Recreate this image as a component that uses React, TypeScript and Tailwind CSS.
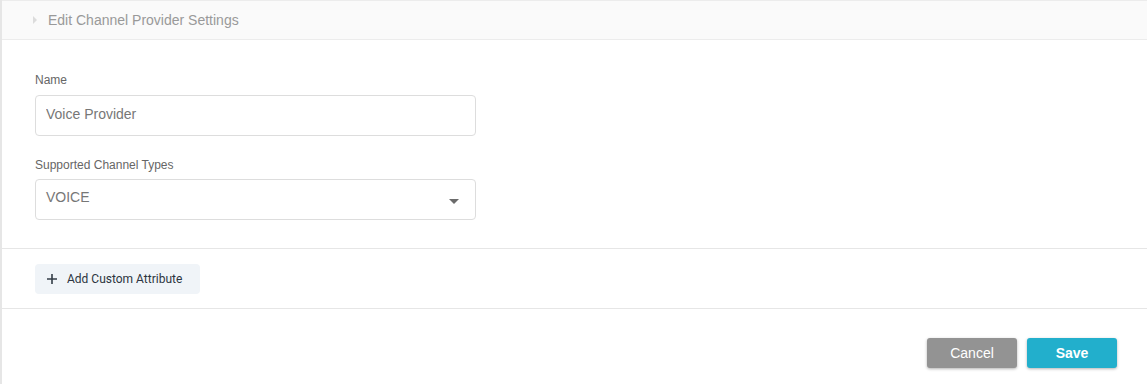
import * as React from 'react';
import { useState } from 'react';

export default function App() {
  const [name, setName] = useState('Voice Provider');
  const [channel, setChannel] = useState('VOICE');

  return (
    <div className="w-full h-[384px] bg-white font-['Liberation_Sans',Arial,sans-serif] border-l-2 border-[#e6e6e6] flex flex-col">
      {/* Header */}
      <div className="h-[40px] bg-[#fafafa] border-t border-b border-[#ececec] flex items-center pl-[30px]">
        <svg className="w-[6px] h-[8px] mr-[10px]" viewBox="0 0 6 8">
          <path d="M1 0 L5 4 L1 8 Z" fill="#dcdcdc" />
        </svg>
        <span className="text-[14px] text-[#999999] pt-[1px]">Edit Channel Provider Settings</span>
      </div>

      {/* Fields */}
      <div className="px-[33px] pt-[32px] pb-[28px] border-b border-[#e6e6e6]">
        <label className="block text-[12px] leading-[16px] text-[#666666] mb-[7px]">Name</label>
        <input
          value={name}
          onChange={(e) => setName(e.target.value)}
          className="block w-[441px] h-[41px] px-[10px] pb-[4px] border border-[#dddddd] rounded-[4px] text-[14px] text-[#777777] outline-none"
        />

        <label className="block text-[12px] leading-[16px] text-[#666666] mt-[21px] mb-[6px]">
          Supported Channel Types
        </label>
        <div className="relative w-[441px] h-[41px] border border-[#dddddd] rounded-[4px] flex items-center">
          <span className="pl-[10px] pb-[4px] text-[14px] text-[#777777]">{channel}</span>
          <svg
            className="absolute right-[16px] top-[19px] w-[10px] h-[5px]"
            viewBox="0 0 10 5"
            onClick={() => setChannel(channel)}
          >
            <path d="M0 0 L10 0 L5 5 Z" fill="#6b6b6b" />
          </svg>
        </div>
      </div>

      {/* Custom attributes */}
      <div className="px-[33px] pt-[15px] pb-[14px] border-b border-[#e6e6e6]">
        <button className="h-[30px] w-[165px] bg-[#f0f4f8] rounded-[4px] flex items-center pl-[12px] font-['Roboto',sans-serif] font-normal text-[12px] text-[#2c3540]">
          <svg className="w-[10px] h-[10px] mr-[10px]" viewBox="0 0 10 10">
            <path d="M5 0 V10 M0 5 H10" stroke="#333d47" strokeWidth="1.6" />
          </svg>
          Add Custom Attribute
        </button>
      </div>

      {/* Footer */}
      <div className="flex justify-end gap-[10px] pr-[30px] pt-[29px]">
        <button className="w-[90px] h-[30px] rounded-[3px] bg-[#939393] text-white text-[14px] shadow-[0_1px_3px_rgba(0,0,0,0.3)]">
          Cancel
        </button>
        <button className="w-[90px] h-[30px] rounded-[3px] bg-[#22afcc] text-white text-[14px] font-bold shadow-[0_1px_3px_rgba(0,0,0,0.3)]">
          Save
        </button>
      </div>
    </div>
  );
}
